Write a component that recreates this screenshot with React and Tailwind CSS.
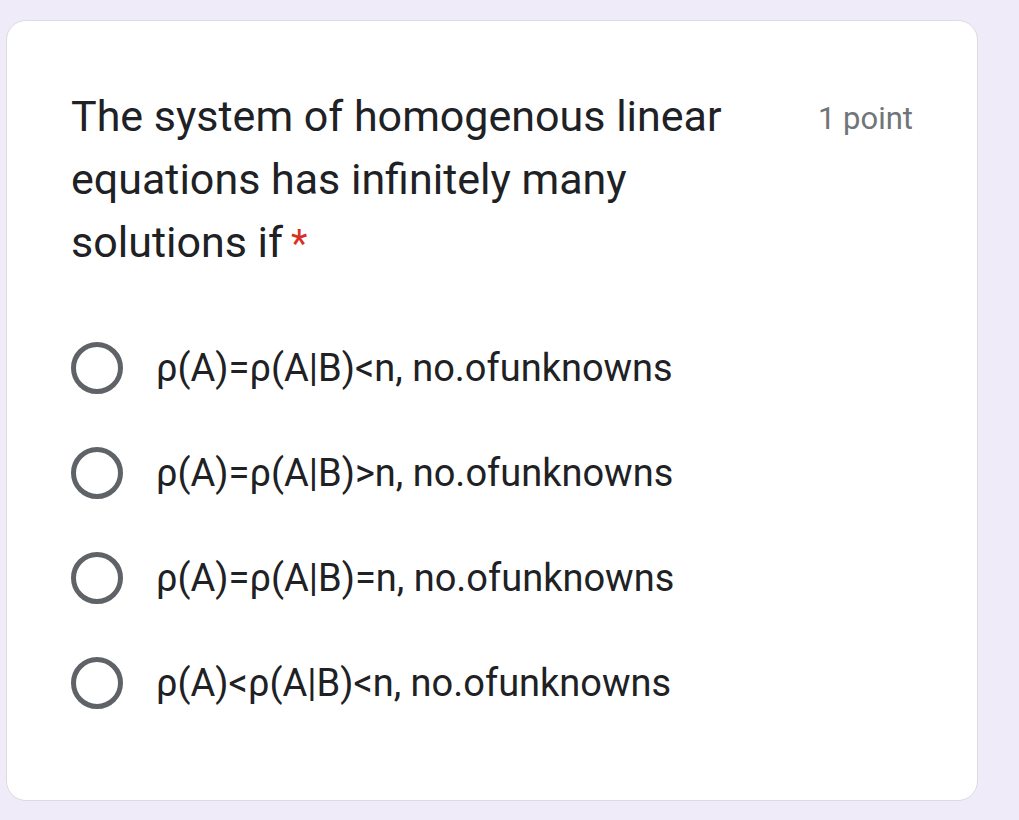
import React from 'react'

const options = [
  'ρ(A)=ρ(A|B)<n, no.ofunknowns',
  'ρ(A)=ρ(A|B)>n, no.ofunknowns',
  'ρ(A)=ρ(A|B)=n, no.ofunknowns',
  'ρ(A)<ρ(A|B)<n, no.ofunknowns',
]

function Radio() {
  return <div className="w-[52px] h-[52px] shrink-0 rounded-full border-[5px] border-[#5f6368]" />
}

export default function App() {
  return (
    <div className="min-h-[820px] w-[1019px] bg-[#f0ebf8] pt-[20px] pl-[6px]" style={{ fontFamily: 'Roboto, sans-serif' }}>
      <div className="w-[972px] h-[781px] bg-white rounded-[20px] border-[1.5px] border-[#dadce0] pl-[64px] pr-[64px] pt-[64px]">
        <div className="flex justify-between items-start">
          <div className="w-[690px] text-[43px] leading-[63px] text-[#202124]">
            The system of homogenous linear equations has infinitely many solutions if
            <span className="ml-[8px] text-[38px] text-[#d93025]">*</span>
          </div>
          <div className="mt-[2px] text-[31px] leading-[63px] text-[#70757a]">1 point</div>
        </div>
        <div className="mt-[66px] flex flex-col gap-[53px]">
          {options.map((o) => (
            <div key={o} className="flex items-center gap-[33px]">
              <Radio />
              <span className="text-[38px] leading-[52px] text-[#202124]">{o}</span>
            </div>
          ))}
        </div>
      </div>
    </div>
  )
}
